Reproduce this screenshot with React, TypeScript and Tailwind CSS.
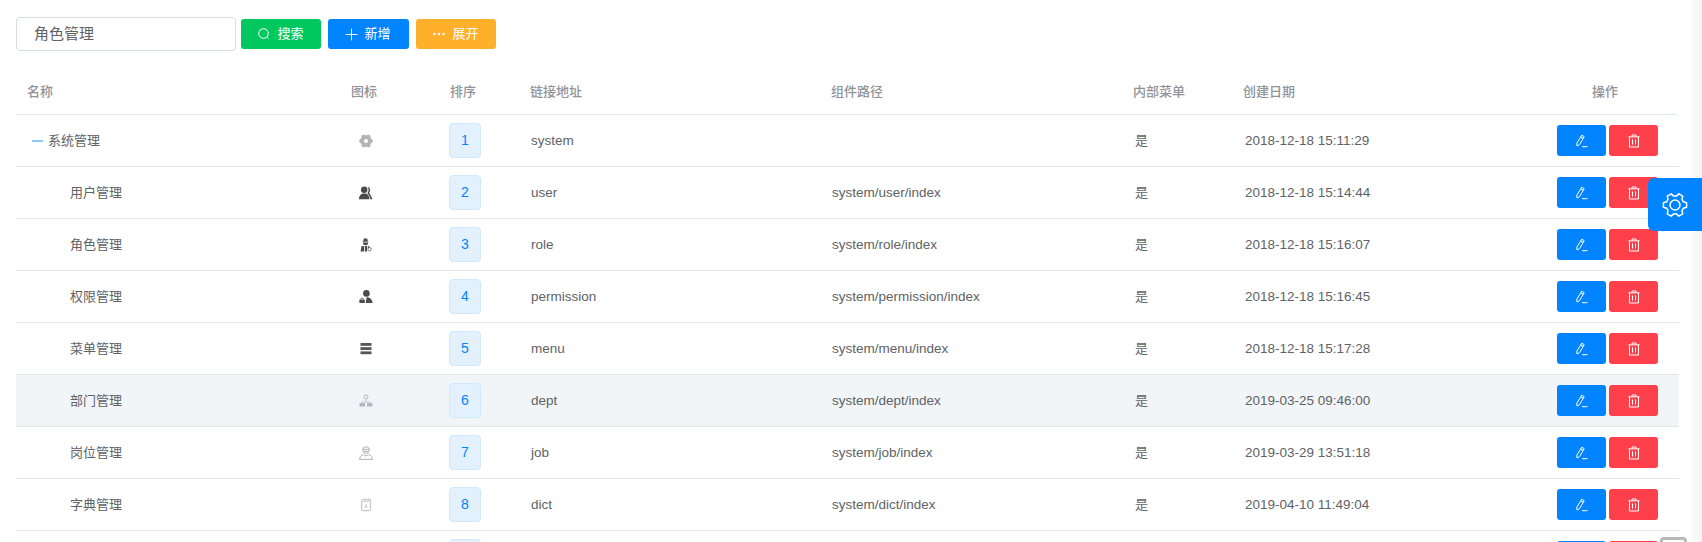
import type { ReactNode } from "react";
import { Plus } from "lucide-react";

const sans = "font-['Liberation_Sans','Noto_Sans_CJK_SC',sans-serif]";

// outline of a six-toothed cog, centred on 0,0
const cogPoints = (outer: number, inner: number) => {
  const pts: string[] = [];
  for (let i = 0; i < 6; i++) {
    const a = i * 60;
    [
      [inner, a - 21],
      [outer, a - 11],
      [outer, a + 11],
      [inner, a + 21],
    ].forEach(([r, d]) => {
      const rad = (d * Math.PI) / 180;
      pts.push(`${(r * Math.cos(rad)).toFixed(2)},${(r * Math.sin(rad)).toFixed(2)}`);
    });
  }
  return pts.join(" ");
};

const GearIcon = () => (
  <svg width="14" height="14" viewBox="-7 -7 14 14">
    <polygon points={cogPoints(6.8, 5.7)} fill="#b4b4b4" />
    <circle r="2.1" fill="#fff" />
  </svg>
);

const UserIcon = () => (
  <svg width="14" height="14" viewBox="0 0 14 14" fill="#4a4a4f">
    <circle cx="5.2" cy="3.8" r="3.2" />
    <path d="M0 13.2c0-3.6 2-5.6 5.2-5.6s5.2 2 5.2 5.6z" />
    <path d="M8.6 .8a3.4 3.4 0 0 1 1.6 5.6l3.4 6.8h-2.2c-.4-2.4-1.4-4.6-3-5.8 1.500-1.800 1.500-4.600.2-6.600z" />
  </svg>
);

const RoleIcon = () => (
  <svg width="14" height="14" viewBox="0 0 14 14" fill="#4a4a4f">
    <path d="M4.200 3.200L4.800.5h3.400l.6 2.700 1.400.6H2.800z" />
    <path d="M3.800 4.600h5.400a2.700 2.700 0 0 1-5.400 0z" />
    <path d="M2.600 8h2.600v5.500H1.500zM6 8h2v5.500H6zM8.800 8h1.400v2H8.800z" />
    <circle cx="10.600" cy="11.200" r="1.700" fill="none" stroke="#77777c" strokeWidth="1" />
  </svg>
);

const PermissionIcon = () => (
  <svg width="14" height="14" viewBox="0 0 14 14" fill="#4a4a4f">
    <circle cx="7.400" cy="3.400" r="3.300" />
    <path d="M7.600 7.200c3 0 5.600 1.800 6 5.800H6.800l.4-3z" />
    <rect x="0.400" y="9.600" width="5.400" height="3.400" />
    <path d="M1.800 9.600c0-2 2.600-2 2.600 0" fill="none" stroke="#4a4a4f" />
  </svg>
);

const MenuIcon = () => (
  <svg width="14" height="14" viewBox="0 0 14 14" fill="#55555a">
    <rect x="1.500" y="1" width="11" height="2.800" />
    <rect x="1.500" y="5.200" width="11" height="2.800" />
    <rect x="1.500" y="9.400" width="11" height="2.800" />
  </svg>
);

const DeptIcon = () => (
  <svg width="14" height="14" viewBox="0 0 14 14" fill="#b4b8bc">
    <circle cx="7" cy="3" r="2" fill="none" stroke="#b4b8bc" />
    <path d="M7 5v3M3 8h8M3 8v1.500M11 8v1.500" fill="none" stroke="#b4b8bc" strokeWidth="0.7" />
    <rect x="0.500" y="9" width="5.500" height="3.500" />
    <rect x="8" y="9" width="5.500" height="3.500" />
  </svg>
);

const JobIcon = () => (
  <svg width="14" height="14" viewBox="0 0 14 14" fill="none" stroke="#a8a8a8" strokeWidth="0.9">
    <circle cx="7" cy="4" r="3.300" />
    <path d="M3.700 3.300h6.600M4.800 5.400h4.400" />
    <path d="M.6 13.400c0-2.800 1.800-4.400 3.800-4.800l2.600 1.400 2.600-1.400c2 .4 3.800 2 3.800 4.800z" />
  </svg>
);

const DictIcon = () => (
  <svg width="14" height="14" viewBox="0 0 14 14" fill="none" stroke="#b4b4b4" strokeWidth="0.9">
    <path d="M2.600 3c0-1.100.7-1.700 1.700-1.700h7v2" />
    <rect x="2.600" y="3.200" width="8.800" height="9.500" rx="1" />
    <path d="M5.800 10l1.200-3.400L8.200 10" strokeWidth="0.7" />
  </svg>
);

const SearchGlyph = () => (
  <svg width="12" height="12" viewBox="0 0 12 12" fill="none" stroke="currentColor" strokeWidth="1">
    <circle cx="5.500" cy="5.500" r="4.800" />
    <path d="M9 9l1.500 1.500" />
  </svg>
);

const DotsGlyph = () => (
  <svg width="12" height="4" viewBox="0 0 12 4" fill="currentColor">
    <circle cx="1.500" cy="2" r="1.200" />
    <circle cx="6" cy="2" r="1.200" />
    <circle cx="10.500" cy="2" r="1.200" />
  </svg>
);

const EditGlyph = () => (
  <svg width="13" height="14" viewBox="0 0 13 14" fill="none" stroke="currentColor" strokeWidth="1">
    <path d="M6.800 1.200l2.400 1.500-4.800 8-2.400 1.300-.2-2.800z" />
    <path d="M5.800 2.900l2.400 1.500" />
    <path d="M7 12.700h5.500" />
  </svg>
);

const TrashGlyph = () => (
  <svg width="12" height="14" viewBox="0 0 12 14" fill="none" stroke="currentColor" strokeWidth="1">
    <path d="M.5 2.800h11M4 2.800V1h4v1.800" />
    <path d="M1.500 2.800v10.200h9V2.800" />
    <path d="M4.500 5.400v5.200M7.500 5.400v5.200" />
  </svg>
);

type Row = {
  name: string;
  icon: ReactNode;
  sort: number;
  link: string;
  path: string;
  date: string;
  parent?: boolean;
  hover?: boolean;
};

const rows: Row[] = [
  { name: "系统管理", icon: <GearIcon />, sort: 1, link: "system", path: "", date: "2018-12-18 15:11:29", parent: true },
  { name: "用户管理", icon: <UserIcon />, sort: 2, link: "user", path: "system/user/index", date: "2018-12-18 15:14:44" },
  { name: "角色管理", icon: <RoleIcon />, sort: 3, link: "role", path: "system/role/index", date: "2018-12-18 15:16:07" },
  { name: "权限管理", icon: <PermissionIcon />, sort: 4, link: "permission", path: "system/permission/index", date: "2018-12-18 15:16:45" },
  { name: "菜单管理", icon: <MenuIcon />, sort: 5, link: "menu", path: "system/menu/index", date: "2018-12-18 15:17:28" },
  { name: "部门管理", icon: <DeptIcon />, sort: 6, link: "dept", path: "system/dept/index", date: "2019-03-25 09:46:00", hover: true },
  { name: "岗位管理", icon: <JobIcon />, sort: 7, link: "job", path: "system/job/index", date: "2019-03-29 13:51:18" },
  { name: "字典管理", icon: <DictIcon />, sort: 8, link: "dict", path: "system/dict/index", date: "2019-04-10 11:49:04" },
  // only the top edge of this row is on screen
  { name: "", icon: null, sort: 9, link: "", path: "", date: "" },
];

const cols = "grid-cols-[272px_152px_80px_302px_301px_110px_300px_1fr]";

const ToolButton = ({ className, icon, label }: { className: string; icon: ReactNode; label: string }) => (
  <button className={`flex h-[30px] items-center justify-center gap-[7px] rounded-[3px] text-[13px] text-white ${className}`}>
    {icon}
    {label}
  </button>
);

export default function App() {
  return (
    <div className={`relative flex h-[542px] w-[1702px] overflow-hidden bg-white ${sans}`}>
      <div className="w-[1692px] shrink-0 pl-4">
        <div className="flex items-center pt-[17px]">
          <div className="flex h-[34px] w-[220px] items-center rounded-[4px] border border-[#d8dce5] pt-px pl-[17px] text-[15px] text-[#606266]">
            角色管理
          </div>
          <div className="ml-[5px] flex gap-[7px]">
            <ToolButton className="w-[80px] bg-[#00c85f]" icon={<SearchGlyph />} label="搜索" />
            <ToolButton className="w-[81px] bg-[#0084ff]" icon={<Plus size={19} strokeWidth={1.2} className="-mx-[4px]" />} label="新增" />
            <ToolButton className="w-[80px] bg-[#ffb02a]" icon={<DotsGlyph />} label="展开" />
          </div>
        </div>

        <div className={`mt-[17px] grid h-[47px] w-[1661px] ${cols} items-center border-b border-[#dfe6ec] pt-[2px] text-[13px] font-medium text-[#909399]`}>
          <div className="pl-[11px]">名称</div>
          <div className="text-center">图标</div>
          <div className="pl-[10px]">排序</div>
          <div className="pl-[10px]">链接地址</div>
          <div className="pl-[9px]">组件路径</div>
          <div className="pl-[10px]">内部菜单</div>
          <div className="pl-[10px]">创建日期</div>
          <div className="text-center">操作</div>
        </div>

        <div className="w-[1663px]">
          {rows.map((row) => (
            <div
              key={row.sort}
              className={`grid h-[52px] ${cols} items-center border-b border-[#dfe6ec] text-[13.5px] text-[#606266] ${row.hover ? "bg-[#f1f5f8]" : ""}`}
            >
              <div className={`flex items-center text-[13px] ${row.parent ? "pl-[16px]" : "pl-[54px]"}`}>
                {row.parent && <span className="mr-[5px] h-[2px] w-[11px] bg-[#8cc8f8]" />}
                {row.name}
              </div>
              <div className="flex justify-center pl-[3px]">{row.icon}</div>
              <div className="pl-[9px]">
                <span className="flex h-[35px] w-[32px] items-center justify-center rounded-[4px] border border-[#d1e9ff] bg-[#e3f1ff] text-[14px] text-[#0084ff]">
                  {row.name && row.sort}
                </span>
              </div>
              <div className="pt-px pl-[11px]">{row.link}</div>
              <div className="pt-px pl-[10px]">{row.path}</div>
              <div className="pl-[12px] text-[13px]">{row.name && "是"}</div>
              <div className="pt-px pl-[12px]">{row.date}</div>
              <div className="flex justify-end gap-[3px] pr-[21px]">
                <button className="flex h-[31px] w-[49px] items-center justify-center rounded-[3px] bg-[#0084ff] text-white">
                  <EditGlyph />
                </button>
                <button className="flex h-[31px] w-[49px] items-center justify-center rounded-[3px] bg-[#ff404a] text-white">
                  <TrashGlyph />
                </button>
              </div>
            </div>
          ))}
        </div>
      </div>

      <div className="flex-1 bg-gradient-to-r from-[#fafafa] to-[#f5f5f5]" />

      {/* settings tab pinned to the right edge */}
      <div className="absolute top-[178px] right-0 flex h-[53px] w-[54px] items-center justify-center rounded-l-[6px] bg-[#0084ff] text-white">
        <svg width="26" height="26" viewBox="-13 -13 26 26" fill="none" stroke="currentColor" strokeWidth="1.5" strokeLinejoin="round">
          <polygon points={cogPoints(11.8, 9)} />
          <circle r="5" />
        </svg>
      </div>

      {/* corner of the floating box cut off by the bottom edge */}
      <div className="absolute top-[537px] left-[1660px] h-[20px] w-[27px] rounded-[4px] border-[3px] border-[#b9b9b9] bg-white" />
    </div>
  );
}
